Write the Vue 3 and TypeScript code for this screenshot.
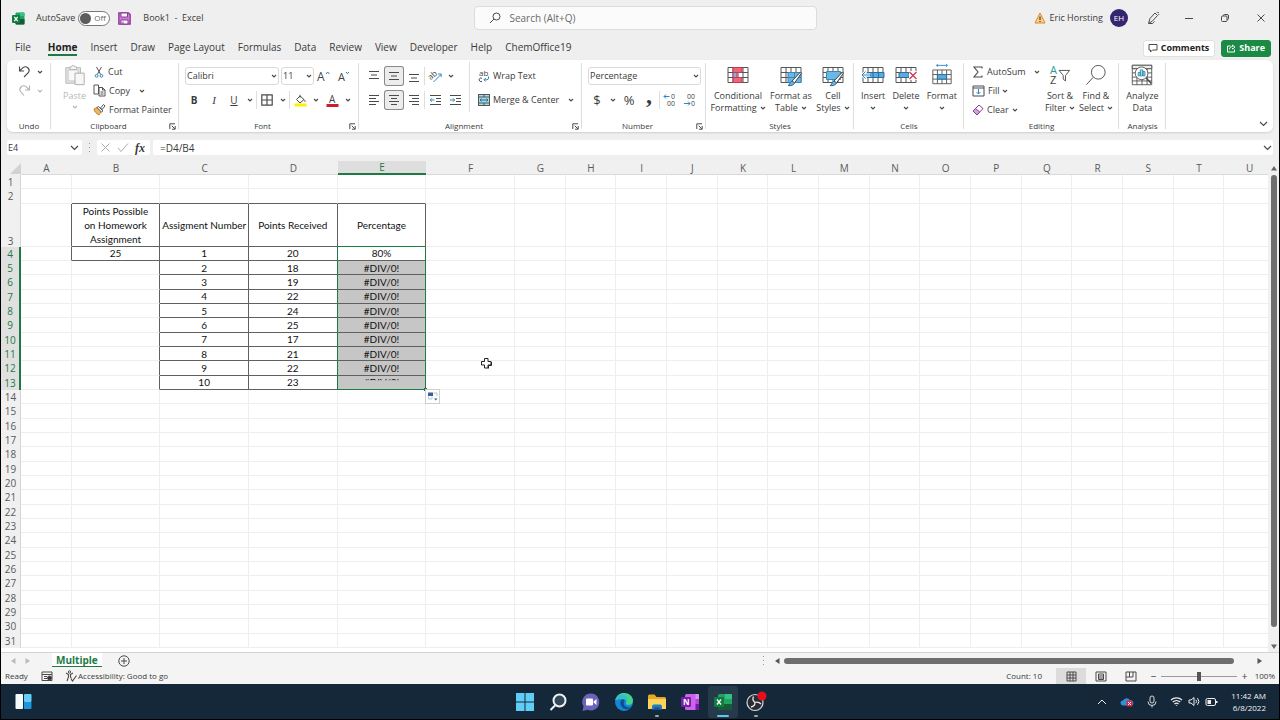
<script setup lang="ts">
import { h, ref } from 'vue'

interface Glyph { w: number; h: number; body: string }

const grid3 = '<path d="M1 3.5h20v15H1zM1 8.5h20M1 13.5h20M6 3.5v15M11 3.5v15M16 3.5v15" stroke="#555" fill="#fff"/>'

const glyphs: Record<string, Glyph> = {
  excel: { w: 13, h: 13, body: '<rect x="3.500" y="0.500" width="9" height="12" rx="1" fill="#21a366" stroke="none"/><path d="M8 .5h3.500a1 1 0 0 1 1 1V4H8z" fill="#33c481" stroke="none"/><path d="M3.500 7h9v4.500a1 1 0 0 1-1 1h-7a1 1 0 0 1-1-1z" fill="#185c37" stroke="none"/><rect x="0" y="3" width="8" height="8" rx="1" fill="#107c41" stroke="none"/><path d="M2.300 4.800l3.400 4.400M5.700 4.800L2.300 9.200" stroke="#fff" stroke-width="1.200"/>' },
  save: { w: 13, h: 13, body: '<path d="M.8.800h9.700l1.700 1.700v9.700H.8z" fill="#c77fd0" stroke="#8c3a9b" stroke-width="1.300"/><path d="M3 1v4h6.500V1zM3 12V8h7v4z" fill="#fff" stroke="#8c3a9b"/><path d="M5 9.500v2.500" stroke="#8c3a9b"/>' },
  search: { w: 12, h: 12, body: '<circle cx="7.500" cy="4.500" r="3.500"/><path d="M5 7L1 11"/>' },
  warn: { w: 12, h: 12, body: '<path d="M6 1l5 10H1z" fill="#f9cf8e" stroke="#d98a2b"/><path d="M6 4.500v3.500M6 9v1" stroke="#5a3a10" stroke-width="1.200"/>' },
  pen: { w: 14, h: 14, body: '<path d="M2.500 12.500L4 7.500 9 2l2.500 2.500-5.200 5.700zM3 12.500h3.500l2-2M11 .8l.3 1M13.300 3.500l-1-.2M13 1l-.8.800"/>' },
  min: { w: 10, h: 10, body: '<path d="M1 5.500h8"/>' },
  restore: { w: 10, h: 10, body: '<rect x="1.500" y="3" width="5.500" height="5.500" rx="1"/><path d="M3.500 3V2.500a1 1 0 0 1 1-1H7A1.500 1.500 0 0 1 8.500 3v2.500a1 1 0 0 1-1 1H7"/>' },
  close: { w: 10, h: 10, body: '<path d="M1.500 1.500l7 7M8.500 1.500l-7 7"/>' },
  comment: { w: 10, h: 10, body: '<path d="M1 1.500h8v5.500H4.500L2.500 9V7H1z"/>' },
  share: { w: 10, h: 10, body: '<path d="M4.500 3H1.500v6h7V6.500M3.500 6.500c0-2 1.500-3 3-3V2L9 4.200 6.500 6V5" stroke="#fff"/>' },
  chev: { w: 6, h: 6, body: '<path d="M1 2l2 2 2-2" stroke-width="1.100"/>' },
  chevBig: { w: 9, h: 9, body: '<path d="M1 3l3.500 3.500L8 3" stroke-width="1.200"/>' },
  undo: { w: 13, h: 13, body: '<path d="M1.500 1.500v4.500H6M1.500 6L5 2.700a3.700 3.700 0 0 1 5.500 4.800L6 12" stroke-width="1.100"/>' },
  redo: { w: 13, h: 13, body: '<path d="M11.500 1.500v4.500H7M11.500 6L8 2.700a3.700 3.700 0 0 0-5.500 4.800L6 11.500" stroke="#b4b4b4" stroke-width="1.100"/>' },
  paste: { w: 22, h: 24, body: '<path d="M1 4h16v17H1z" fill="#e6e6e6" stroke="#b5b5b5"/><path d="M3.500 6.500h11v12h-11z" fill="#f8f8f8" stroke="#c4c4c4"/><path d="M5.500 6V3h2a1.500 1.500 0 0 1 3 0h2v3z" fill="#f5f5f5" stroke="#b5b5b5"/><path d="M11 10h10v12.500H11z" fill="#f7f7f7" stroke="#a8a8a8"/>' },
  cut: { w: 12, h: 12, body: '<path d="M3.500 1l4.200 7.500M8.500 1L4.300 8.500" stroke="#555"/><circle cx="3.600" cy="9.800" r="1.400" stroke="#2b88b8"/><circle cx="8.400" cy="9.800" r="1.400" stroke="#2b88b8"/>' },
  copy: { w: 13, h: 13, body: '<path d="M5 10H1V1h4.500v9M6 3.500h3.500l2.500 2.500v6H6zM9.500 3.500V6H12M7.500 8h3M7.500 10h3" stroke="#555"/>' },
  painter: { w: 13, h: 13, body: '<path d="M1 6l3-1.500 4 4L6 12C4 11 1.500 9 1 6z" fill="#f2b566" stroke="#c87f28"/><path d="M4 4.500l1.500-1 4.500 4.300-1.500 1.400zM7.500 5L10.500 1.500l1.500 1.500L9 6.500z" fill="#fff" stroke="#555"/>' },
  launch: { w: 7, h: 7, body: '<path d="M.8 6V.8H6M2.800 2.800l3 3M6.200 3v3.200H3"/>' },
  growA: { w: 14, h: 13, body: '<text x="0" y="11" font-size="12" fill="#444" stroke="none">A</text><path d="M9 4l1.700-2L12.400 4" stroke="#2b78a8"/>' },
  shrinkA: { w: 14, h: 13, body: '<text x="1" y="11" font-size="11" fill="#444" stroke="none">A</text><path d="M9 2l1.500 1.700L12 2" stroke="#2b78a8"/>' },
  borders: { w: 12, h: 12, body: '<path d="M.8.800h10.400v10.400H.8zM6 1v10M1 6h10" stroke-width="1.200"/>' },
  fill: { w: 13, h: 13, body: '<rect x="0.500" y="9.500" width="12" height="3" fill="#fff200" stroke="none"/><path d="M2.500 5.500L6 2l4 3.500L6 9zM6 3.500V.8M10 5.500c1 1 1.200 1.500 1 2.500"/>' },
  fontColor: { w: 13, h: 13, body: '<rect x="0.500" y="10" width="12" height="3" fill="#d01c2a" stroke="none"/><text x="3" y="9" font-size="10" fill="#444" stroke="none">A</text>' },
  alTop: { w: 12, h: 12, body: '<path d="M1 1.500h10M3 5h6M1 8.500h10"/>' },
  alMid: { w: 12, h: 12, body: '<path d="M1 2.500h10M3 6h6M1 9.500h10"/>' },
  alBot: { w: 12, h: 12, body: '<path d="M1 4.500h10M3 8h6M1 11.500h10"/>' },
  alLeft: { w: 12, h: 12, body: '<path d="M1 1.500h10M1 4.500h7M1 7.500h10M1 10.500h7"/>' },
  alCen: { w: 12, h: 12, body: '<path d="M1 1.500h10M3 4.500h6M1 7.500h10M3 10.500h6"/>' },
  alRight: { w: 12, h: 12, body: '<path d="M1 1.500h10M4 4.500h7M1 7.500h10M4 10.500h7"/>' },
  orient: { w: 13, h: 13, body: '<text x="0" y="8" font-size="8" fill="#444" stroke="none" transform="rotate(-40 4 7)">ab</text><path d="M4.500 12L12 4.500M9 4h3.200v3" stroke="#2b88c8"/>' },
  outdent: { w: 13, h: 12, body: '<path d="M1 1.500h11M7 4.500h5M7 7.500h5M1 10.500h11"/><path d="M5.500 6H1.500M3 4.300L1.300 6 3 7.700" stroke="#2b88b8"/>' },
  indent: { w: 13, h: 12, body: '<path d="M1 1.500h11M7 4.500h5M7 7.500h5M1 10.500h11"/><path d="M1 6h4.500M4 4.300L5.700 6 4 7.700" stroke="#2b88b8"/>' },
  wrap: { w: 12, h: 13, body: '<text x="1" y="6" font-size="8" fill="#444" stroke="none">ab</text><path d="M4 8.300a1.800 1.800 0 1 0 0 3"/><path d="M10.500 6.500v1.500a1.800 1.800 0 0 1-1.800 1.800H6M7.700 8L6 9.800l1.700 1.700" stroke="#2b88b8"/>' },
  merge: { w: 12, h: 12, body: '<rect x="0.500" y="0.500" width="11" height="11" fill="#a6dcea" stroke="#555"/><path d="M.5 3h11M.5 9h11M6 .5V3M6 9v2.500" stroke="#555"/><path d="M2 6h8M3.500 4.700L2 6l1.500 1.300M8.500 4.700L10 6 8.500 7.300" stroke="#1d6f8c"/>' },
  decInc: { w: 14, h: 14, body: '<text x="8" y="6" font-size="7" fill="#444" stroke="none">0</text><text x="4" y="13" font-size="7" fill="#444" stroke="none">00</text><path d="M6.500 3.500H1M3 1.500l-2 2 2 2" stroke="#2b88c8"/>' },
  decDec: { w: 14, h: 14, body: '<text x="4" y="6" font-size="7" fill="#444" stroke="none">00</text><text x="8" y="13" font-size="7" fill="#444" stroke="none">0</text><path d="M1 10.500h6M5 8.500l2 2-2 2" stroke="#2b88c8"/>' },
  cond: { w: 22, h: 22, body: grid3 + '<path d="M6 3.500h9v5H6zM6 13.500h9v5H6z" fill="#f2647c" stroke="#c23b52"/><path d="M6 8.500h4v5H6z" fill="#7fb4dc" stroke="#c23b52"/>' },
  fmtTable: { w: 22, h: 22, body: grid3 + '<path d="M8 8.500h13v10H8z" fill="#6db7e4" stroke="#3c86b4"/><path d="M8 13.500h13M14.500 8.500v10" stroke="#3c86b4"/><path d="M12 17L20.500 8l1 1-7 10z" fill="#fff" stroke="#444"/><path d="M8 21.500c2 0 1-3 4-4.500l2.500 2c-1 2.500-4 3-6.500 2.500z" fill="#6db7e4" stroke="#2c6d99"/>' },
  cellStyle: { w: 22, h: 22, body: grid3 + '<path d="M4.500 7.500h14v8h-14z" fill="#6db7e4" stroke="#3c86b4"/><path d="M12 17L20.500 8l1 1-7 10z" fill="#fff" stroke="#444"/><path d="M8 21.500c2 0 1-3 4-4.500l2.500 2c-1 2.500-4 3-6.500 2.500z" fill="#6db7e4" stroke="#2c6d99"/>' },
  insert: { w: 24, h: 22, body: '<g transform="translate(1 0)">' + grid3 + '</g><path d="M5 8.500h18v5H5z" fill="#5aace0" stroke="#2c6d99"/><path d="M12 8.500v5M17.500 8.500v5" stroke="#2c6d99"/><path d="M9 11H1.500M5 7.500L1.500 11 5 14.500" stroke="#fff" stroke-width="3"/><path d="M10 11H1M4.500 7.500L1 11l3.500 3.500" stroke="#2b88c8"/>' },
  del: { w: 24, h: 22, body: '<g transform="translate(1 0)">' + grid3 + '</g><path d="M5 8.500h10v5H5z" fill="#5aace0" stroke="#2c6d99"/><path d="M15 7h9v9h-9z" fill="#fff" stroke="none"/><path d="M15.500 8l7 7M22.500 8l-7 7" stroke="#d0324a" stroke-width="1.200"/>' },
  format: { w: 22, h: 24, body: '<g transform="translate(0 3)">' + grid3 + '<path d="M6 8.500h10v5H6z" fill="#5aace0" stroke="#2c6d99"/></g><path d="M5 1.500h12M6.500 0L5 1.500 6.500 3M15.500 0L17 1.500 15.500 3" stroke="#2b88c8"/>' },
  sigma: { w: 12, h: 12, body: '<path d="M10 2.500V1H2l4 5-4 5h8V9.500" stroke-width="1.100"/>' },
  fillDown: { w: 13, h: 12, body: '<path d="M1 1h11v10H1zM1 3h11"/><path d="M6.500 4v5M4.500 7l2 2 2-2" stroke="#2b88c8"/>' },
  clear: { w: 12, h: 12, body: '<path d="M1 7l6-6 4 3.500-6 6.500z" fill="#fff" stroke="#8c3a9b"/><path d="M1 7l2.500-2.500L7.800 8 5 11z" fill="#d7a0e0" stroke="#8c3a9b"/>' },
  sort: { w: 22, h: 24, body: '<text x="0" y="11" font-size="12" fill="#2b9a9a" stroke="none">A</text><text x="0" y="22" font-size="12" fill="#444" stroke="none">Z</text><path d="M10 7h11.500l-4.500 5.500v6l-2.500-2v-4z"/>' },
  find: { w: 24, h: 24, body: '<circle cx="14.500" cy="9" r="7.500"/><path d="M9 14.500L1.500 22.500"/>' },
  analyze: { w: 26, h: 26, body: '<path d="M1.500 1.500h23v23h-23zM1.500 5.500h23M1.500 10.500h23M1.500 15.500h23M1.500 20h23M7 5.500v19M13 5.500v19M19 5.500v19" fill="#fff"/><path d="M1.500 1.500h23v4h-23z" fill="#eee"/><circle cx="12.500" cy="11" r="7.500" fill="#fff"/><path d="M18 16.500l6 6.500" stroke="#444" stroke-width="1.500"/><path d="M8.500 10h2.500v4H8.500zM11 7h3v7h-3zM14 9h2.500v5H14z" fill="#a6dcea" stroke="#2b88a8"/>' },
  cross: { w: 11, h: 11, body: '<path d="M1.500 1.500l8 8M9.500 1.500l-8 8" stroke="#aaa"/>' },
  tick: { w: 12, h: 11, body: '<path d="M1 6l3 3.500L11 1.500" stroke="#aaa"/>' },
  dots: { w: 3, h: 11, body: '<path d="M1 1h1v1H1zM1 5h1v1H1zM1 9h1v1H1z" fill="#999" stroke="none"/>' },
  corner: { w: 12, h: 12, body: '<path d="M12 1v11H1z" fill="#d2d2d2" stroke="none"/>' },
  triL: { w: 6, h: 8, body: '<path d="M5.500 1v6L1 4z" fill="currentColor" stroke="none"/>' },
  triR: { w: 6, h: 8, body: '<path d="M.5 1v6L5 4z" fill="currentColor" stroke="none"/>' },
  triU: { w: 8, h: 6, body: '<path d="M1 5.500h6L4 1z" fill="currentColor" stroke="none"/>' },
  triD: { w: 8, h: 6, body: '<path d="M1 .5h6L4 5z" fill="currentColor" stroke="none"/>' },
  add: { w: 12, h: 12, body: '<circle cx="6" cy="6" r="5.200"/><path d="M6 3v6M3 6h6"/>' },
  macro: { w: 12, h: 11, body: '<path d="M1 1h10v8.500H1zM1 3.500h10M3 5.500h3M3 7.500h3"/><circle cx="8.500" cy="7" r="2" fill="#333"/>' },
  access: { w: 12, h: 12, body: '<circle cx="4.500" cy="2" r="1.200"/><path d="M1 3l2.500 1.500V7L2 11M8 3L5.500 4.500V7l1 1.500M6 9l1.500 2L11.500 5.500" stroke-width="1.100"/>' },
  vNormal: { w: 11, h: 11, body: '<path d="M1 1h9v9H1zM1 4h9M1 7h9M4 1v9M7 1v9"/>' },
  vPage: { w: 12, h: 11, body: '<path d="M1 1h10v9H1zM3.500 3h5v5.500h-5zM4 5h4M4 7h4"/>' },
  vBreak: { w: 12, h: 11, body: '<path d="M1 1h10v9H1zM4.500 1v5M8 1v5M1 6h7"/>' },
  smart: { w: 11, h: 11, body: '<rect x="1" y="1.500" width="5" height="3.500" fill="#3d5f96" stroke="none"/><path d="M6.500 2h3.500v3M1.500 5.500V8H5V5.500" stroke="#b9c6d8"/><path d="M7 7.500h3.500L8.700 9.500z" fill="#3d5f96" stroke="none"/>' },
  plus: { w: 12, h: 12, body: '<path d="M4.500 1.500h3.500v3h3v3.500H8v3H4.500V8h-3V4.500h3z" fill="#fff" stroke="#222"/><path d="M8.500 11.500V8.500h3V5" stroke="#222"/>' },
  widgets: { w: 17, h: 17, body: '<rect x="0.500" y="1" width="7.500" height="15" rx="1" fill="#f4fbff" stroke="none"/><rect x="9" y="1" width="7.500" height="8" rx="1" fill="#64cdfa" stroke="none"/><path d="M9 9h7.500v6a1 1 0 0 1-1 1H9z" fill="#1f93dc" stroke="none"/>' },
  win: { w: 20, h: 20, body: '<path d="M1 1h8.500v8.500H1zM10.500 1H19v8.500h-8.500zM1 10.500h8.500V19H1zM10.500 10.500H19V19h-8.500z" fill="#5fcdf5" stroke="none"/>' },
  tSearch: { w: 20, h: 20, body: '<circle cx="11.500" cy="8.500" r="6" stroke="#f2f2f2" stroke-width="2" fill="#31475a"/><path d="M7 13.500L2.500 18" stroke="#f2f2f2" stroke-width="2"/>' },
  chat: { w: 20, h: 20, body: '<path d="M10 1.500a8.500 8.500 0 1 1-3.500 16.300L1.500 19l1-4.500A8.500 8.500 0 0 1 10 1.500z" fill="#6a63b8" stroke="none"/><rect x="5" y="6.500" width="7" height="7" rx="1" fill="#fff" stroke="none"/><path d="M12.500 9.500l3-2.500v6l-3-2.500z" fill="#fff" stroke="none"/>' },
  edge: { w: 20, h: 20, body: '<circle cx="10" cy="10" r="9" fill="#1586d4" stroke="none"/><path d="M1.300 8C2.500 3.500 6 1 10 1c5 0 9 3.500 9 7.500 0 3-2 4.500-4.500 4.500-2 0-3-.8-2.500-2 1-2-.5-4-3-4-3 0-6 .5-7.700 1z" fill="#41d28c" stroke="none"/><path d="M1.300 8C2.500 4 6 2.500 9 3c4 .5 5 4 3.500 6C12 6.800 10 6 8.500 6.200 5 6.500 2 7 1.300 8z" fill="#33b8d8" stroke="none"/><path d="M7.500 8c-2.500 2.500-1 8 4 9 2.500.5 4.500-.5 6-2-3 1.200-6.500 0-7.500-2.500C9.500 11 10 9.500 10.500 9 10 7.700 8.500 7 7.500 8z" fill="#0c4f94" stroke="none"/>' },
  folder: { w: 20, h: 20, body: '<path d="M1 4a1.500 1.500 0 0 1 1.500-1.500h5L9.500 5h8A1.500 1.500 0 0 1 19 6.500V17H1z" fill="#e8a723" stroke="none"/><path d="M1 7h18v10H1z" fill="#fcd45d" stroke="none"/><path d="M5 17.500v-3a2 2 0 0 1 2-2h6a2 2 0 0 1 2 2v3z" fill="#2378c2" stroke="none"/><path d="M7.500 15.500h5v2h-5z" fill="#164f86" stroke="none"/>' },
  onenote: { w: 20, h: 20, body: '<rect x="5" y="2" width="14" height="16" rx="1.500" fill="#ca64ea" stroke="none"/><path d="M15.500 2H18a1 1 0 0 1 1 1v4h-3.500z" fill="#d98cf2" stroke="none"/><path d="M15.500 7H19v5h-3.500z" fill="#ae4bd5" stroke="none"/><path d="M15.500 12H19v5a1 1 0 0 1-1 1h-2.500z" fill="#7719aa" stroke="none"/><rect x="1" y="5" width="10" height="10" rx="1" fill="#7a1fa8" stroke="none"/><text x="3" y="13" font-size="8" font-weight="700" fill="#fff" stroke="none">N</text>' },
  tExcel: { w: 20, h: 20, body: '<rect x="5" y="2" width="14" height="16" rx="1.500" fill="#21a366" stroke="none"/><path d="M12 2h6a1 1 0 0 1 1 1v4h-7z" fill="#33c481" stroke="none"/><path d="M12 12h7v5a1 1 0 0 1-1 1H5v-5z" fill="#185c37" stroke="none"/><rect x="1" y="5" width="10" height="10" rx="1" fill="#107c41" stroke="none"/><path d="M4 7.500l4 5M8 7.500l-4 5" stroke="#fff" stroke-width="1.300"/>' },
  obs: { w: 22, h: 20, body: '<circle cx="10" cy="10.500" r="8" fill="#2b2b33" stroke="#d8d8d8" stroke-width="1.200"/><path d="M10 10.500C8 9 7.500 6.500 8.500 4.500M10 10.500c2.500-1 4.500 0 6 1.500M10 10.500c0 2.500-1.500 4-4 4.500" stroke="#e8e8e8" stroke-width="1.300"/><circle cx="17" cy="4" r="4.500" fill="#e60f1c" stroke="none"/>' },
  up: { w: 10, h: 10, body: '<path d="M1 7l4-4 4 4" stroke="#eee"/>' },
  cloud: { w: 14, h: 12, body: '<path d="M3 9.500A2.500 2.500 0 0 1 3 4.500 4 4 0 0 1 10 4a3 3 0 0 1 2 5.500z" fill="#2f8fd8" stroke="none"/><rect x="6.500" y="4.500" width="6" height="6" rx="1.500" fill="#d8263c" stroke="none"/><path d="M8 6l3 3M11 6L8 9" stroke="#fff"/>' },
  mic: { w: 10, h: 13, body: '<rect x="3" y="1" width="4" height="7" rx="2" stroke="#ddd"/><path d="M1 6.500a4 4 0 0 0 8 0M5 10.500v2" stroke="#ddd"/>' },
  wifi: { w: 13, h: 11, body: '<path d="M1 4a8 8 0 0 1 11 0M2.800 6a5.400 5.400 0 0 1 7.400 0M4.500 8a3 3 0 0 1 4 0M6.500 9.200v.8" stroke="#eee" stroke-width="1.200"/>' },
  sound: { w: 12, h: 11, body: '<path d="M1 4h2l3-2.500v8L3 7H1zM7.800 3.800a2.500 2.500 0 0 1 0 3.400M9.500 2.200a5 5 0 0 1 0 6.600" stroke="#eee"/>' },
  battery: { w: 13, h: 10, body: '<rect x="1" y="1.500" width="9.500" height="7" rx="1.500" stroke="#eee"/><path d="M2.500 3h3.500v4H2.500zM11 4h1.500v2H11z" fill="#eee" stroke="none"/>' },
}

const Ic = (props: { n: string }) => {
  const g = glyphs[props.n]
  return h('svg', {
    width: g.w, height: g.h, viewBox: `0 0 ${g.w} ${g.h}`, fill: 'none', stroke: '#4a4a4a',
    'aria-hidden': 'true', innerHTML: g.body, class: 'ic',
  })
}
Ic.props = ['n']

const tabs = ['File', 'Home', 'Insert', 'Draw', 'Page Layout', 'Formulas', 'Data', 'Review', 'View', 'Developer', 'Help', 'ChemOffice19']
const activeTab = ref('Home')
const fontName = ref('Calibri')
const fontSize = ref('11')
const numberFormat = ref('Percentage')
const formula = ref('=D4/B4')
const cellName = ref('E4')
const query = ref('')
const zoom = ref(50)

const columns = 'ABCDEFGHIJKLMNOPQRSTU'.split('')
const points = [20, 18, 19, 22, 24, 25, 17, 21, 22, 23]

const cells: Record<string, string> = {
  B3: 'Points Possible\non Homework\nAssignment',
  C3: 'Assigment Number',
  D3: 'Points Received',
  E3: 'Percentage',
  B4: '25',
}
points.forEach((p, i) => {
  cells[`C${i + 4}`] = String(i + 1)
  cells[`D${i + 4}`] = String(p)
  cells[`E${i + 4}`] = i === 0 ? '80%' : '#DIV/0!'
})

const boxed = (c: number, r: number) =>
  (c === 1 && (r === 3 || r === 4)) || (c >= 2 && c <= 4 && r >= 3 && r <= 13)

function cellClass(c: number, r: number) {
  const inSel = r >= 4 && r <= 13
  return {
    inkR: boxed(c, r) || boxed(c + 1, r),
    inkB: boxed(c, r) || boxed(c, r + 1),
    selR: inSel && (c === 3 || c === 4),
    selB: c === 4 && (r === 3 || r === 13),
    shaded: c === 4 && r > 4 && r <= 13,
    last: c === 4 && r === 13,
    host: c === 5 && r === 12,
  }
}

const taskIcons = [
  { n: 'win', label: 'Start', run: '' },
  { n: 'tSearch', label: 'Search', run: '' },
  { n: 'chat', label: 'Chat', run: '' },
  { n: 'edge', label: 'Edge', run: '' },
  { n: 'folder', label: 'File Explorer', run: 'run' },
  { n: 'onenote', label: 'OneNote', run: '' },
  { n: 'tExcel', label: 'Excel', run: 'run focus' },
  { n: 'obs', label: 'OBS Studio', run: 'run' },
]
</script>

<template>
  <div class="screen">
    <header class="title">
      <div class="title-left">
        <Ic n="excel" />
        <span class="autosave">AutoSave</span>
        <button class="toggle" aria-label="AutoSave"><i></i>Off</button>
        <button class="plain" aria-label="Save"><Ic n="save" /></button>
        <span class="doc">Book1&nbsp; -&nbsp; Excel</span>
      </div>
      <label class="search"><Ic n="search" /><input v-model="query" type="text" placeholder="Search (Alt+Q)" aria-label="Search" /></label>
      <div class="title-right">
        <Ic n="warn" /><span class="user">Eric Horsting</span><span class="avatar">EH</span>
        <button class="win" aria-label="Pen"><Ic n="pen" /></button>
        <button class="win" aria-label="Minimize"><Ic n="min" /></button>
        <button class="win" aria-label="Restore"><Ic n="restore" /></button>
        <button class="win" aria-label="Close"><Ic n="close" /></button>
      </div>
    </header>

    <nav class="tabs">
      <button v-for="t in tabs" :key="t" :class="['tab', { on: t === activeTab }]" @click="activeTab = t">{{ t }}</button>
      <span class="grow"></span>
      <button class="pill"><Ic n="comment" />Comments</button>
      <button class="pill share"><Ic n="share" />Share</button>
    </nav>

    <section class="ribbon">
      <div class="group g-undo">
        <div class="body rows">
          <div class="line"><button class="tb" aria-label="Undo"><Ic n="undo" /></button><button class="dd" aria-label="Undo list"><Ic n="chev" /></button></div>
          <div class="line"><button class="tb" aria-label="Redo"><Ic n="redo" /></button><button class="dd faded" aria-label="Redo list"><Ic n="chev" /></button></div>
        </div>
        <div class="foot"><span>Undo</span></div>
      </div>

      <div class="group g-clip">
        <div class="body">
          <button class="big off"><Ic n="paste" /><span>Paste</span><Ic n="chev" /></button>
          <div class="rows">
            <button class="cmd"><Ic n="cut" />Cut</button>
            <button class="cmd"><Ic n="copy" />Copy<span class="tail"><Ic n="chev" /></span></button>
            <button class="cmd"><Ic n="painter" />Format Painter</button>
          </div>
        </div>
        <div class="foot"><span>Clipboard</span><button class="launch" aria-label="Clipboard settings"><Ic n="launch" /></button></div>
      </div>

      <div class="group g-font">
        <div class="body two">
          <div class="line">
            <label class="pick font"><select v-model="fontName" aria-label="Font"><option>Calibri</option></select><Ic n="chev" /></label>
            <label class="pick size"><select v-model="fontSize" aria-label="Font size"><option>11</option></select><Ic n="chev" /></label>
            <button class="tb" aria-label="Increase font size"><Ic n="growA" /></button>
            <button class="tb" aria-label="Decrease font size"><Ic n="shrinkA" /></button>
          </div>
          <div class="line">
            <button class="tb b">B</button><button class="tb i">I</button><button class="tb u">U</button>
            <button class="dd" aria-label="Underline style"><Ic n="chev" /></button><i class="sep"></i>
            <button class="tb" aria-label="Borders"><Ic n="borders" /></button><button class="dd" aria-label="Border list"><Ic n="chev" /></button><i class="sep"></i>
            <button class="tb" aria-label="Fill color"><Ic n="fill" /></button><button class="dd" aria-label="Fill colors"><Ic n="chev" /></button>
            <button class="tb" aria-label="Font color"><Ic n="fontColor" /></button><button class="dd" aria-label="Font colors"><Ic n="chev" /></button>
          </div>
        </div>
        <div class="foot"><span>Font</span><button class="launch" aria-label="Font settings"><Ic n="launch" /></button></div>
      </div>

      <div class="group g-align">
        <div class="body">
          <div class="two al">
            <div class="line">
              <button class="tb" aria-label="Top align"><Ic n="alTop" /></button><button class="tb sel" aria-label="Middle align"><Ic n="alMid" /></button><button class="tb" aria-label="Bottom align"><Ic n="alBot" /></button><i class="sep"></i>
              <button class="tb" aria-label="Orientation"><Ic n="orient" /></button><button class="dd" aria-label="Orientation list"><Ic n="chev" /></button>
            </div>
            <div class="line">
              <button class="tb" aria-label="Align left"><Ic n="alLeft" /></button><button class="tb sel" aria-label="Center"><Ic n="alCen" /></button><button class="tb" aria-label="Align right"><Ic n="alRight" /></button><i class="sep"></i>
              <button class="tb" aria-label="Decrease indent"><Ic n="outdent" /></button><button class="tb" aria-label="Increase indent"><Ic n="indent" /></button>
            </div>
          </div>
          <div class="two wrapcol">
            <button class="cmd"><Ic n="wrap" />Wrap Text</button>
            <button class="cmd"><Ic n="merge" />Merge &amp; Center<span class="tail"><Ic n="chev" /></span></button>
          </div>
        </div>
        <div class="foot"><span>Alignment</span><button class="launch" aria-label="Alignment settings"><Ic n="launch" /></button></div>
      </div>

      <div class="group g-num">
        <div class="body two">
          <div class="line"><label class="pick num"><select v-model="numberFormat" aria-label="Number format"><option>Percentage</option></select><Ic n="chev" /></label></div>
          <div class="line">
            <button class="tb sym">$</button><button class="dd" aria-label="Currency list"><Ic n="chev" /></button>
            <button class="tb sym">%</button><button class="tb comma">,</button><i class="sep"></i>
            <button class="tb" aria-label="Increase decimal"><Ic n="decInc" /></button><button class="tb" aria-label="Decrease decimal"><Ic n="decDec" /></button>
          </div>
        </div>
        <div class="foot"><span>Number</span><button class="launch" aria-label="Number settings"><Ic n="launch" /></button></div>
      </div>

      <div class="group g-style">
        <div class="body around">
          <button class="big"><Ic n="cond" /><span>Conditional</span><span class="dn">Formatting<Ic n="chev" /></span></button>
          <button class="big"><Ic n="fmtTable" /><span>Format as</span><span class="dn">Table<Ic n="chev" /></span></button>
          <button class="big"><Ic n="cellStyle" /><span>Cell</span><span class="dn">Styles<Ic n="chev" /></span></button>
        </div>
        <div class="foot"><span>Styles</span></div>
      </div>

      <div class="group g-cells">
        <div class="body around">
          <button class="big"><Ic n="insert" /><span>Insert</span><span class="dn"><Ic n="chev" /></span></button>
          <button class="big"><Ic n="del" /><span>Delete</span><span class="dn"><Ic n="chev" /></span></button>
          <button class="big"><Ic n="format" /><span>Format</span><span class="dn"><Ic n="chev" /></span></button>
        </div>
        <div class="foot"><span>Cells</span></div>
      </div>

      <div class="group g-edit">
        <div class="body">
          <div class="rows edits">
            <button class="cmd"><Ic n="sigma" />AutoSum<span class="tail"><Ic n="chev" /></span></button>
            <button class="cmd"><Ic n="fillDown" />Fill<Ic n="chev" /></button>
            <button class="cmd"><Ic n="clear" />Clear<Ic n="chev" /></button>
          </div>
          <button class="big"><Ic n="sort" /><span>Sort &amp;</span><span class="dn">Filter<Ic n="chev" /></span></button>
          <button class="big"><Ic n="find" /><span>Find &amp;</span><span class="dn">Select<Ic n="chev" /></span></button>
        </div>
        <div class="foot"><span>Editing</span></div>
      </div>

      <div class="group g-anal">
        <div class="body around"><button class="big"><Ic n="analyze" /><span>Analyze</span><span class="dn">Data</span></button></div>
        <div class="foot"><span>Analysis</span></div>
      </div>
      <button class="collapse" aria-label="Collapse ribbon"><Ic n="chevBig" /></button>
    </section>

    <section class="fbar">
      <label class="namebox"><input v-model="cellName" type="text" aria-label="Name box" /><Ic n="chevBig" /></label>
      <Ic n="dots" />
      <div class="fx">
        <button class="plain" aria-label="Cancel"><Ic n="cross" /></button>
        <button class="plain" aria-label="Enter"><Ic n="tick" /></button>
        <button class="plain fxb">fx</button>
      </div>
      <label class="formula"><input v-model="formula" type="text" aria-label="Formula" /><Ic n="chevBig" /></label>
    </section>

    <main class="sheet">
      <div class="view">
        <table>
          <thead>
            <tr>
              <th class="cor" aria-label="Select all"><Ic n="corner" /></th>
              <th v-for="c in columns" :key="c" scope="col" :class="['ch', { hot: c === 'E' }]">{{ c }}</th>
            </tr>
          </thead>
          <tbody>
            <tr v-for="r in 31" :key="r">
              <th scope="row" :class="['rh', { hot: r >= 4 && r <= 13, tall: r === 3 }]">{{ r }}</th>
              <td v-for="(c, ci) in columns" :key="c" :class="cellClass(ci, r)">
                <span v-if="cells[c + r]">{{ cells[c + r] }}</span>
                <template v-if="c === 'E' && r === 13"><i class="handle"></i><button class="smart" aria-label="Auto fill options"><Ic n="smart" /></button></template>
                <div v-if="c === 'F' && r === 12" class="cursor"><Ic n="plus" /></div>
              </td>
            </tr>
          </tbody>
        </table>
      </div>
      <div class="vbar"><Ic n="triU" /><i></i><Ic n="triD" /></div>
    </main>

    <section class="sheets">
      <button class="plain pale" aria-label="Previous sheet"><Ic n="triL" /></button>
      <button class="plain pale" aria-label="Next sheet"><Ic n="triR" /></button>
      <button class="sheet-tab">Multiple</button>
      <button class="plain" aria-label="New sheet"><Ic n="add" /></button>
      <div class="hbar"><Ic n="dots" /><Ic n="triL" /><i></i><Ic n="triR" /></div>
    </section>

    <footer class="status">
      <span class="ready">Ready</span>
      <Ic n="macro" />
      <button class="plain acc"><Ic n="access" />Accessibility: Good to go</button>
      <span class="grow"></span>
      <span class="count">Count: 10</span>
      <button class="vw on" aria-label="Normal view"><Ic n="vNormal" /></button>
      <button class="vw" aria-label="Page layout view"><Ic n="vPage" /></button>
      <button class="vw" aria-label="Page break view"><Ic n="vBreak" /></button>
      <button class="zb">−</button>
      <input v-model="zoom" class="zoom" type="range" min="0" max="100" aria-label="Zoom" />
      <button class="zb">+</button>
      <span class="pct">100%</span>
    </footer>

    <div class="taskbar">
      <div class="side"><button class="plain" aria-label="Widgets"><Ic n="widgets" /></button></div>
      <button v-for="t in taskIcons" :key="t.n" :class="['task', t.run]" :aria-label="t.label"><Ic :n="t.n" /></button>
      <div class="side tray">
        <button class="plain" aria-label="Hidden icons"><Ic n="up" /></button>
        <Ic n="cloud" /><Ic n="mic" />
        <div class="net"><Ic n="wifi" /><Ic n="sound" /><Ic n="battery" /></div>
        <div class="clock"><span>11:42 AM</span><span>6/8/2022</span></div>
      </div>
    </div>
  </div>
</template>

<style>
html, body { margin: 0; background: #000; }
.ic { display: block; flex: none; overflow: visible; }
</style>

<style scoped>
.screen {
  display: flex; flex-direction: column; height: 100vh; min-height: 480px; box-sizing: border-box;
  border: solid #000; border-width: 0 1px 1px; background: #efefef; color: #3a3a3a;
  font: 9px/12px "Open Sans", "Noto Sans", sans-serif; overflow: hidden; white-space: nowrap;
}
button, input, select { font: inherit; color: inherit; border: 0; padding: 0; margin: 0; background: none; outline: none; min-width: 0; }
button { display: flex; align-items: center; justify-content: center; }
.grow { flex: 1; }

.title { display: flex; align-items: center; height: 36px; padding-left: 11px; flex: none; }
.title-left, .title-right { flex: 1; display: flex; align-items: center; }
.title-right { justify-content: flex-end; }
.autosave { margin: 0 3px 0 11px; }
.toggle { width: 32px; height: 15px; box-sizing: border-box; border: 1px solid #777; border-radius: 8px; background: #fff; justify-content: flex-start; gap: 3px; padding-left: 1px; font-size: 8px; color: #666; margin-right: 8px; }
.toggle i { width: 11px; height: 11px; border-radius: 50%; background: #5c5c5c; }
.doc { margin-left: 12px; }
.search { width: 27%; height: 24px; box-sizing: border-box; display: flex; align-items: center; gap: 8px; padding-left: 14px; background: #fbfbfb; border: 1px solid #dcdcdc; border-radius: 4px; font-size: 10px; }
.search input { flex: 1; }
.search input::placeholder { color: #6a6a6a; opacity: 1; }
.user { margin: 0 7px 0 4px; }
.avatar { width: 18px; height: 18px; border-radius: 50%; background: #35246f; color: #fff; font-size: 8px; line-height: 18px; text-align: center; margin-right: 7px; }
.win { width: 36px; height: 36px; }

.tabs { display: flex; align-items: center; height: 24px; padding: 0 8px 0 14px; gap: 13px; font-size: 10px; flex: none; }
.tab { height: 16px; border-bottom: 2px solid transparent; }
.tab:first-child { margin-right: 4px; }
.tab.on { font-weight: 700; border-color: #1d7a45; color: #222; }
.pill { height: 17px; padding: 0 5px 0 4px; gap: 3px; background: #fff; border: 1px solid #e0e0e0; border-radius: 3px; font-weight: 700; font-size: 9px; color: #222; margin-left: -7px; }
.pill.share { background: #1a8a45; border-color: #1a8a45; color: #fff; }

.ribbon { display: flex; height: 72px; margin: 0 6px; background: #fff; border-radius: 6px; box-shadow: 0 1px 2px #cfcfcf; flex: none; }
.group { display: flex; flex-direction: column; box-sizing: border-box; padding: 2px 0 0 5px; position: relative; flex: none; }
.group::after { content: ""; width: 1px; background: #dedede; position: absolute; right: 0; top: 3px; bottom: 3px; }
.g-undo { width: 44px; }
.g-undo .line { padding-left: 2px; }
.g-clip { width: 128px; }
.g-font { width: 180px; }
.g-align { width: 223px; }
.g-num { width: 124px; }
.g-style { width: 148px; }
.g-cells { width: 110px; }
.g-edit { width: 155px; }
.g-anal { width: 47px; }
.g-style, .g-cells, .g-anal { padding-left: 0; }
.body { display: flex; height: 57px; }
.around { justify-content: space-evenly; }
.rows { display: flex; flex-direction: column; }
.rows > * { height: 19px; }
.two { display: flex; flex-direction: column; padding-top: 2px; height: 48px; }
.two > * { height: 24px; flex: none; }
.line { display: flex; align-items: center; }
.foot { display: flex; align-items: center; height: 12px; font-size: 8px; margin-top: auto; }
.foot span { flex: 1; text-align: center; }
.g-undo .foot, .g-clip .foot, .g-font .foot, .g-align .foot, .g-num .foot, .g-edit .foot { margin-left: -5px; }
.launch { width: 13px; height: 12px; }
.tb { width: 20px; height: 20px; flex: none; }
.dd { width: 12px; height: 20px; flex: none; }
.faded { opacity: 0.4; }
.sep { width: 1px; height: 18px; background: #dedede; flex: none; }
.sel { background: #ececec; box-shadow: inset 0 0 0 1px #8a8a8a; border-radius: 3px; }
.b { font-weight: 700; font-size: 10px; }
.i { font-style: italic; font-size: 11px; font-family: "Liberation Serif", serif; }
.u { text-decoration: underline; font-size: 10px; }
.sym { font-size: 13px; }
.comma { font: 700 24px/8px "Liberation Serif", serif; padding-bottom: 10px; }
.pick { display: flex; align-items: center; box-sizing: border-box; height: 18px; border: 1px solid #dadada; border-radius: 3px; padding: 0 1px; }
.pick select { appearance: none; flex: 1; height: 16px; }
.font { width: 94px; margin: 0 2px 0 1px; }
.size { width: 33px; }
.num { width: 113px; margin-left: 1px; }
.al { width: 105px; border-right: 1px solid #dedede; }
.wrapcol { padding-left: 8px; }
.cmd { justify-content: flex-start; gap: 3px; padding: 0; }
.tail { margin-left: 6px; }
.big { flex-direction: column; justify-content: flex-start; height: 57px; line-height: 12px; }
.big > svg:first-child { margin: 2px 0 4px; height: 22px; }
.dn { display: flex; align-items: center; gap: 3px; height: 12px; }
.off { color: #b8b8b8; width: 37px; }
.off > svg:last-child { opacity: 0.4; margin-top: 2px; }
.edits { width: 70px; padding-left: 3px; flex: none; }
.edits .tail { margin-left: 5px; }
.g-edit .big { width: 36px; flex: none; }
.collapse { margin: auto 5px 4px auto; }

.fbar { display: flex; align-items: center; padding: 8px 6px 6px; gap: 6px; height: 15px; flex: none; }
.namebox, .formula, .fx { display: flex; align-items: center; height: 15px; background: #fff; border-radius: 2px; box-sizing: border-box; }
.namebox { width: 75px; padding: 0 3px 0 1px; }
.namebox input, .formula input { flex: 1; }
.fx { gap: 6px; padding: 0 5px 0 3px; }
.fxb { font: italic 700 12px/12px "Liberation Serif", serif; }
.formula { flex: 1; padding: 0 1px 0 7px; margin-left: -3px; }
.formula input { font-size: 10px; }

.sheet { display: flex; flex: 1; min-height: 0; }
.view { flex: 1; overflow: hidden; background: #fff; min-width: 0; }
table {
  display: grid; width: calc(100% + 7px); height: 100%;
  grid-template-columns: 20px 4fr repeat(5, 7fr) repeat(15, 4fr);
  grid-template-rows: 14px minmax(0, 1fr) minmax(0, 1fr) minmax(0, 3fr) repeat(28, minmax(0, 1fr)) 4px;
}
thead, tbody, tr { display: contents; }
th, td { display: flex; align-items: center; justify-content: center; padding: 0; min-width: 0; min-height: 0; box-sizing: border-box; position: relative; }
th { font-weight: 400; font-size: 10px; line-height: 12px; color: #5a5a5a; background: #f0f0f0; }
.cor { justify-content: flex-end; }
.ch { border-bottom: 1px solid #dadada; }
.ch.hot { background: #dedede; color: #1d7a45; border-bottom: 2px solid #1d7a45; }
.rh { border-right: 1px solid #d4d4d4; }
.rh.tall { align-items: flex-end; }
.rh.hot { background: #e0e0e0; color: #1d7a45; border-right: 2px solid #1d7a45; }
td { border: solid #eeeeee; border-width: 0 1px 1px 0; font: 10px/14px Lato, "Open Sans", sans-serif; color: #111; text-align: center; white-space: pre-line; }
.inkR { border-right-color: #606060; }
.inkB { border-bottom-color: #606060; }
.selR { border-right-color: #1d7a45; }
.selB { border-bottom-color: #1d7a45; }
.shaded { background: #c6c6c6; }
.last span { clip-path: inset(0 0 64% 0); }
.last, .host { z-index: 1; }
.handle { position: absolute; right: -2px; bottom: -2px; width: 3px; height: 3px; background: #1d7a45; }
.smart { position: absolute; left: 100%; top: 100%; width: 15px; height: 15px; background: #fff; border: 1px solid #cfcfcf; }
.cursor { position: absolute; left: 54px; top: -4px; }
.vbar { width: 11px; display: flex; flex-direction: column; align-items: center; padding: 4px 0 2px; gap: 4px; color: #666; background: #f0f0f0; box-sizing: border-box; }
.vbar i { flex: 1; width: 6px; border-radius: 3px; background: #6e6e6e; margin-bottom: 13px; }

.sheets { display: flex; align-items: center; height: 15px; background: #f4f4f4; border-top: 1px solid #d4d4d4; padding: 0 16px 0 9px; gap: 9px; flex: none; }
.pale { color: #bbb; }
.sheet-tab { height: 14px; padding: 0 4px; margin: 0 7px 0 12px; background: #fff; border-bottom: 1px solid #1d7a45; color: #1d7a45; font-weight: 700; font-size: 10px; align-self: flex-start; box-sizing: border-box; }
.hbar { margin-left: auto; width: 40%; display: flex; align-items: center; color: #555; gap: 4px; }
.hbar > svg:first-child { margin-right: 5px; }
.hbar i { flex: 1; height: 6px; border-radius: 3px; background: #6e6e6e; margin-right: 19px; }

.status { display: flex; align-items: center; height: 16px; background: #f4f4f4; font-size: 8px; padding: 0 4px; flex: none; }
.ready { width: 36px; }
.acc { margin-left: 12px; gap: 1px; }
.count { margin-right: 14px; }
.vw { width: 30px; height: 16px; }
.vw.on { background: #dcdcdc; }
.zb { width: 15px; font-size: 10px; }
.zoom { appearance: none; width: 76px; height: 10px; background: linear-gradient(#999, #999) center / 100% 1px no-repeat; }
.zoom::-webkit-slider-thumb { appearance: none; width: 4px; height: 9px; background: #555; }
.pct { width: 23px; text-align: right; }

.taskbar { display: flex; align-items: center; height: 35px; background: #15283a; color: #f2f2f2; gap: 3px; flex: none; }
.side { flex: 1; display: flex; align-items: center; padding-left: 14px; }
.tray { justify-content: flex-end; padding: 0 13px 0 0; gap: 13px; }
.net { display: flex; gap: 5px; align-items: center; }
.clock { display: flex; flex-direction: column; text-align: right; font-size: 8px; }
.task { width: 30px; height: 32px; border-radius: 3px; position: relative; }
.task.focus { background: #253a4b; }
.run::after { content: ""; position: absolute; bottom: 1px; width: 4px; height: 2px; border-radius: 1px; background: #9aa7b2; }
.run.focus::after { width: 12px; background: #5fc8f0; }
</style>
